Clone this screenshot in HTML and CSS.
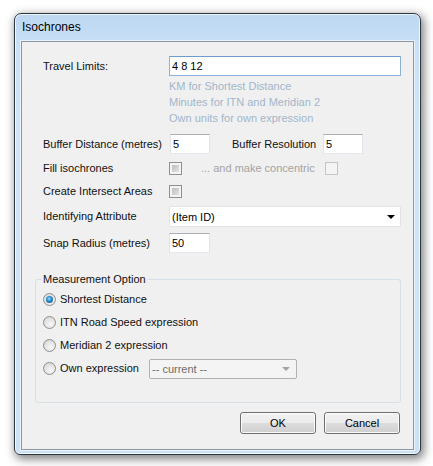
FILE: index.html
```html
<!DOCTYPE html>
<html>
<head>
<meta charset="utf-8">
<title>Isochrones</title>
<link rel="stylesheet" href="styles.css">
</head>
<body>
<div class="window">
  <div class="titlebar">Isochrones</div>
  <div class="client">
    <div class="row h20">
      <span class="lbl w126">Travel Limits:</span>
      <div class="textbox focused w232">4 8 12</div>
    </div>
    <div class="hints">
      <div>KM for Shortest Distance</div>
      <div>Minutes for ITN and Meridian 2</div>
      <div>Own units for own expression</div>
    </div>
    <div class="row h20 mt8">
      <span class="lbl w127">Buffer Distance (metres)</span>
      <div class="textbox w40">5</div>
      <span class="lbl res">Buffer Resolution</span>
      <div class="textbox w40">5</div>
    </div>
    <div class="row h13 mt8">
      <span class="lbl w126">Fill isochrones</span>
      <span class="check"></span>
      <span class="lbl disabled conc">... and make concentric</span>
      <span class="check off"></span>
    </div>
    <div class="row h13 mt10">
      <span class="lbl w126">Create Intersect Areas</span>
      <span class="check"></span>
    </div>
    <div class="row h21 mt8">
      <span class="lbl w126">Identifying Attribute</span>
      <div class="combo w232"><span>(Item ID)</span><span class="arrow"></span></div>
    </div>
    <div class="row h20 mt6">
      <span class="lbl w126">Snap Radius (metres)</span>
      <div class="textbox w41">50</div>
    </div>
    <fieldset class="group">
      <legend>Measurement Option</legend>
      <div class="row h21">
        <span class="radio on"></span><span class="lbl">Shortest Distance</span>
      </div>
      <div class="row h21 mt2">
        <span class="radio"></span><span class="lbl">ITN Road Speed expression</span>
      </div>
      <div class="row h21 mt2">
        <span class="radio"></span><span class="lbl">Meridian 2 expression</span>
      </div>
      <div class="row h21 mt2">
        <span class="radio"></span><span class="lbl w89">Own expression</span>
        <div class="combo dis w148"><span>-- current --</span><span class="arrow"></span></div>
      </div>
    </fieldset>
    <div class="buttons">
      <button class="btn">OK</button>
      <button class="btn">Cancel</button>
    </div>
  </div>
</div>
</body>
</html>
```

FILE: styles.css
```css
html, body {
  margin: 0;
  padding: 0;
  background: #ffffff;
  width: 433px;
  height: 466px;
  overflow: hidden;
}

.window {
  box-sizing: border-box;
  margin: 13px 0 0 14px;
  width: 407px;
  height: 442px;
  border: 1px solid #2d3742;
  border-radius: 7px 7px 6px 6px;
  background: linear-gradient(to bottom, #bcd7f2 0px, #c9e0f6 30px, #d2e5f8 120px, #cde1f5 100%);
  box-shadow: inset 0 0 0 1px rgba(255, 255, 255, 0.75), 2px 3px 10px 1px rgba(0, 0, 0, 0.5);
  padding: 0 6px 4px 6px;
  display: flex;
  flex-direction: column;
  font-family: "Liberation Sans", Arial, sans-serif;
}

.titlebar {
  height: 27px;
  line-height: 27px;
  font-size: 12px;
  color: #000;
  padding-left: 1px;
}

.client {
  box-sizing: border-box;
  height: 409px;
  border: 1px solid #8c97a3;
  box-shadow: 0 0 0 1px rgba(255, 255, 255, 0.6);
  background: #f0f0f0;
  padding: 14px 0 0 21px;
  font-size: 11px;
  color: #111;
}

.row {
  display: flex;
  align-items: center;
}
.h20 { height: 20px; }
.h21 { height: 21px; }
.h13 { height: 13px; }
.mt2 { margin-top: 2px; }
.mt6 { margin-top: 6px; }
.mt8 { margin-top: 8px; }
.mt10 { margin-top: 10px; }

.lbl {
  white-space: nowrap;
  line-height: 13px;
}
.w126 { width: 126px; flex: none; }
.w127 { width: 127px; flex: none; }
.w89 { width: 89px; flex: none; }
.res { margin-left: 22px; width: 91px; }
.conc { margin-left: 19px; width: 124px; }
.disabled { color: #a3a3a3; }

.textbox {
  box-sizing: border-box;
  height: 20px;
  background: #fff;
  border: 1px solid #e2e3ea;
  border-top-color: #abadb3;
  border-bottom-color: #e3e9ef;
  padding-left: 2px;
  line-height: 18px;
  color: #000;
}
.textbox.focused {
  border-color: #8db2d8;
  border-top-color: #6f9ccc;
}
.w232 { width: 232px; }
.w40 { width: 40px; }
.w41 { width: 41px; }
.w148 { width: 148px; }

.hints {
  margin-top: 2px;
  padding-left: 126px;
  color: #a2b6cb;
  line-height: 16px;
}

.check {
  box-sizing: border-box;
  width: 13px;
  height: 13px;
  flex: none;
  border: 1px solid #8e8f8f;
  background: linear-gradient(135deg, #b4b4b4, #ececec);
  box-shadow: inset 0 0 0 2px #f4f4f4;
}
.check.off {
  border-color: #c4c4c4;
  background: #f4f4f4;
  box-shadow: none;
}

.combo {
  box-sizing: border-box;
  height: 21px;
  display: flex;
  align-items: center;
  justify-content: space-between;
  background: #fff;
  border: 1px solid #e3e3e3;
  border-radius: 1px;
  padding: 0 4px 0 2px;
  color: #000;
}
.combo .arrow {
  width: 0;
  height: 0;
  border-left: 4px solid transparent;
  border-right: 4px solid transparent;
  border-top: 4px solid #000;
  margin-right: 1px;
}
.combo.dis {
  height: 20px;
  background: #f4f4f4;
  border: 1px solid #adb2b5;
  border-radius: 2px;
  color: #6d6d6d;
  margin-top: 1px;
}
.combo.dis .arrow {
  border-top-color: #a3a3a3;
  margin-right: 2px;
}

.group {
  box-sizing: border-box;
  width: 366px;
  margin: 19px 0 0 -8px;
  padding: 3px 0 23px 7px;
  border: 1px solid #d5dfe5;
  border-radius: 3px;
  min-inline-size: 0;
}
.group legend {
  padding: 0 2px;
  margin-left: -2px;
  line-height: 14px;
  font-size: 11px;
  color: #111;
}

.radio {
  box-sizing: border-box;
  width: 13px;
  height: 13px;
  flex: none;
  border-radius: 50%;
  border: 1px solid #8f8f8f;
  background: radial-gradient(circle at 60% 65%, #f8f8f8 0%, #e2e2e2 55%, #cfcfcf 100%);
  margin-right: 4px;
  display: flex;
  align-items: center;
  justify-content: center;
}
.radio.on::after {
  content: "";
  width: 7px;
  height: 7px;
  border-radius: 50%;
  background: radial-gradient(circle at 45% 40%, #9ee0ff 0%, #2c8fd0 40%, #0d4f85 90%);
}

.buttons {
  display: flex;
  justify-content: flex-end;
  gap: 8px;
  margin-top: 9px;
  width: 357px;
}
.btn {
  box-sizing: border-box;
  width: 76px;
  height: 22px;
  border: 1px solid #707070;
  border-radius: 3px;
  background: linear-gradient(to bottom, #f2f2f2 0%, #ebebeb 50%, #dddddd 51%, #cfcfcf 100%);
  box-shadow: inset 0 0 0 1px #fbfbfb;
  font-family: "Liberation Sans", Arial, sans-serif;
  font-size: 11px;
  color: #000;
  padding: 0;
}
```
